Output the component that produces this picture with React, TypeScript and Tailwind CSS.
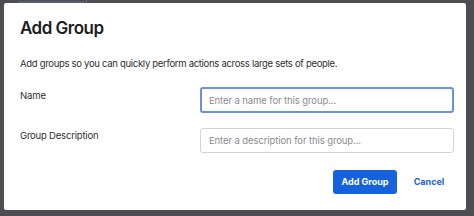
import React from "react";

export default function App() {
    const font = { fontFamily: "Inter, 'Noto Sans', sans-serif" };

    return (
        <div className="w-[474px] h-[216px] bg-[#4d4d52] overflow-hidden" style={font}>
            {/* page behind the overlay, only a sliver shows */}
            <div className="h-[3px] pl-[18px] flex items-end">
                <div className="w-[66px] h-[2px] bg-[#5a5f70]" />
                <div className="ml-[2px] w-px h-[3px] bg-[#6b6b70]" />
            </div>

            <div className="ml-[4px] w-[462px] h-[207px] bg-white rounded-[2px] pl-[16px] pr-[12px] pt-[14px] flex flex-col">
                <h2 className="text-[17px] leading-[23px] font-semibold text-[#1d1d21] tracking-[-0.5px]">Add Group</h2>
                <p className="mt-[17px] text-[9.5px] leading-[14px] tracking-[-0.3px] text-[#2e2e33]">
                    Add groups so you can quickly perform actions across large sets of people.
                </p>

                <div className="mt-[16px] grid grid-cols-[180px_1fr] gap-y-[15px]">
                    <label className="pt-[2px] text-[9.5px] leading-[14px] tracking-[-0.1px] text-[#2e2e33]">Name</label>
                    <input
                        type="text"
                        placeholder="Enter a name for this group..."
                        className="h-[26px] w-full rounded-[3px] border-2 border-[#6c8fe0] px-[7px] text-[9.5px] tracking-[-0.1px] text-[#1d1d21] placeholder-[#8a8a90] outline-none"
                    />
                    <label className="pt-[1px] text-[9.5px] leading-[14px] tracking-[-0.2px] text-[#2e2e33]">Group Description</label>
                    <input
                        type="text"
                        placeholder="Enter a description for this group..."
                        className="h-[25px] w-full rounded-[3px] border border-[#d4d4d8] px-[8px] text-[9.5px] tracking-[-0.1px] text-[#1d1d21] placeholder-[#8a8a90] outline-none"
                    />
                </div>

                <div className="mt-[17px] flex justify-end gap-[7px]">
                    <button className="h-[24px] w-[64px] rounded-[3px] bg-[#1662dd] text-[9px] font-bold text-white">Add Group</button>
                    <button className="h-[24px] w-[50px] text-[9px] font-bold text-[#1662dd]">Cancel</button>
                </div>
            </div>
        </div>
    );
}
